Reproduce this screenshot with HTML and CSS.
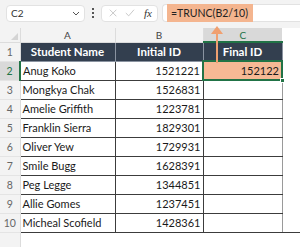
FILE: index.html
```html
<!doctype html>
<html>
<head>
<meta charset="utf-8">
<title>TRUNC formula</title>
<link rel="stylesheet" href="styles.css">
</head>
<body>
<div class="sheet">
  <div class="toolbar">
    <div class="namebox">
      <span>C2</span>
      <svg class="chev" width="8" height="5" viewBox="0 0 8 5"><path d="M1 1 L4 4 L7 1" fill="none" stroke="#555" stroke-width="1"/></svg>
    </div>
    <div class="dots"><i></i><i></i><i></i></div>
    <div class="fxbox">
      <svg width="10" height="10" viewBox="0 0 10 10"><path d="M1 1 L9 9 M9 1 L1 9" stroke="#bdbdbd" stroke-width="1"/></svg>
      <svg width="12" height="10" viewBox="0 0 12 10"><path d="M1 5 L4.5 8.5 L11 1" fill="none" stroke="#bdbdbd" stroke-width="1"/></svg>
      <span class="fx">fx</span>
    </div>
    <div class="formula"><span class="hl">=TRUNC(B2/10)</span></div>
  </div>

  <table class="grid">
    <colgroup>
      <col class="c-row"><col class="c-a"><col class="c-b"><col class="c-c"><col>
    </colgroup>
    <tr class="colhead">
      <th class="corner"><span class="tri"></span></th>
      <th>A</th><th>B</th><th class="sel">C</th><th class="blank"></th>
    </tr>
    <tr class="head">
      <th class="rh">1</th>
      <td>Student Name</td><td>Initial ID</td><td>Final ID</td><td class="blank"></td>
    </tr>
    <tr>
      <th class="rh sel">2</th>
      <td>Anug Koko</td><td class="num">1521221</td><td class="num active">152122<span class="handle"></span></td><td class="blank"></td>
    </tr>
    <tr><th class="rh">3</th><td>Mongkya Chak</td><td class="num">1526831</td><td class="cc"></td><td class="blank"></td></tr>
    <tr><th class="rh">4</th><td>Amelie Griffith</td><td class="num">1223781</td><td class="cc"></td><td class="blank"></td></tr>
    <tr><th class="rh">5</th><td>Franklin Sierra</td><td class="num">1829301</td><td class="cc"></td><td class="blank"></td></tr>
    <tr><th class="rh">6</th><td>Oliver Yew</td><td class="num">1729931</td><td class="cc"></td><td class="blank"></td></tr>
    <tr><th class="rh">7</th><td>Smile Bugg</td><td class="num">1628391</td><td class="cc"></td><td class="blank"></td></tr>
    <tr><th class="rh">8</th><td>Peg Legge</td><td class="num">1344851</td><td class="cc"></td><td class="blank"></td></tr>
    <tr><th class="rh">9</th><td>Allie Gomes</td><td class="num">1237451</td><td class="cc"></td><td class="blank"></td></tr>
    <tr><th class="rh">10</th><td>Micheal Scofield</td><td class="num">1428361</td><td class="cc"></td><td class="blank"></td></tr>
    <tr class="empty"><th class="rh"></th><td class="blank" colspan="4"></td></tr>
  </table>

  <div class="arrow"></div>
</div>
</body>
</html>
```

FILE: styles.css
```css
* {
  box-sizing: border-box;
  margin: 0;
  padding: 0;
}

body {
  background: #fff;
  font-family: Lato, "Open Sans", sans-serif;
  color: #1a1a1a;
}

.sheet {
  position: relative;
  width: 300px;
  height: 247px;
  overflow: hidden;
  background: #f3f3f3;
}

/* formula bar */
.toolbar {
  display: flex;
  align-items: center;
  height: 28px;
  padding: 0 0 2px 6px;
}

.namebox {
  display: flex;
  align-items: center;
  justify-content: space-between;
  width: 79px;
  height: 17px;
  padding: 0 4px 0 4px;
  background: #fff;
  border: 1px solid #e2e2e2;
  border-radius: 4px;
  font-size: 10px;
  color: #333;
}

.dots {
  display: flex;
  flex-direction: column;
  gap: 2px;
  margin: 0 7px 0 7px;
}

.dots i {
  display: block;
  width: 2px;
  height: 2px;
  background: #555;
}

.fxbox {
  display: flex;
  align-items: center;
  gap: 8px;
  width: 57px;
  height: 17px;
  padding: 0 5px 0 7px;
  background: #fff;
  border: 1px solid #e2e2e2;
  border-radius: 4px;
}

.fx {
  font-family: "Liberation Serif", serif;
  font-style: italic;
  font-size: 11px;
  color: #333;
  margin-left: 1px;
}

.formula {
  flex: 1;
  height: 18px;
  margin-left: 4px;
  padding-left: 4px;
  background: #fff;
  border: 1px solid #e2e2e2;
  border-right: none;
  border-radius: 4px 0 0 4px;
  display: flex;
  align-items: center;
}

.formula .hl {
  display: flex;
  align-items: center;
  height: 18px;
  padding: 0 5px 0 4px;
  background: #f4b58f;
  font-size: 10.5px;
  color: #222;
}

/* worksheet grid */
.grid {
  border-collapse: collapse;
  table-layout: fixed;
  width: 300px;
  font-size: 11px;
}

.c-row { width: 20px; }
.c-a { width: 95px; }
.c-b { width: 88px; }
.c-c { width: 79px; }

.grid tr { height: 19px; }

.grid td {
  background: #fff;
  border: 1px solid #3c3c3c;
  padding: 0 2px;
  white-space: nowrap;
  overflow: hidden;
}

.grid td.num { text-align: right; }

.grid td.cc { border-right-color: #9a9a9a; }

.grid td.blank {
  border: none;
  background: #fff;
}

.colhead { height: 14px !important; }

.colhead th {
  font-weight: normal;
  font-size: 10px;
  color: #444;
  background: #f3f3f3;
  border-left: 1px solid #dcdcdc;
  border-bottom: 1px solid #dcdcdc;
}

.colhead th.corner {
  position: relative;
  border-left: none;
}

.tri {
  position: absolute;
  right: 2px;
  bottom: 2px;
  width: 0;
  height: 0;
  border-left: 7px solid transparent;
  border-bottom: 7px solid #d4d4d4;
}

.colhead th.sel {
  background: #d9d9d9;
  color: #217346;
  border-bottom: 2px solid #217346;
}

.colhead th.blank {
  background: #fff;
  border: none;
}

.rh {
  font-weight: normal;
  font-size: 10.5px;
  color: #666;
  background: #f3f3f3;
  border-bottom: 1px solid #e4e4e4;
  border-right: 1px solid #dcdcdc;
}

.rh.sel {
  background: #d9d9d9;
  color: #217346;
  border-right: 2px solid #217346;
}

.head td {
  background: #333f4f;
  color: #fff;
  font-weight: bold;
  font-size: 11.5px;
  text-align: center;
  border: 1px solid #8a93a0;
  border-top: none;
}

.grid td.active {
  position: relative;
  background: #f6b995;
  border: 2px solid #217346;
  overflow: visible;
}

.handle {
  position: absolute;
  right: -4px;
  bottom: -4px;
  width: 5px;
  height: 5px;
  background: #217346;
  border: 1px solid #fff;
}

.empty .rh { border-bottom: none; }
.empty td.blank { border-top: 1px solid #3c3c3c; }

/* pointer from the formula to C2 */
.arrow {
  position: absolute;
  left: 216px;
  top: 31px;
  width: 2px;
  height: 32px;
  background: #f0a070;
}

.arrow::before {
  content: "";
  position: absolute;
  left: -5px;
  top: -5px;
  border-left: 6px solid transparent;
  border-right: 6px solid transparent;
  border-bottom: 8px solid #f0a070;
}
```
